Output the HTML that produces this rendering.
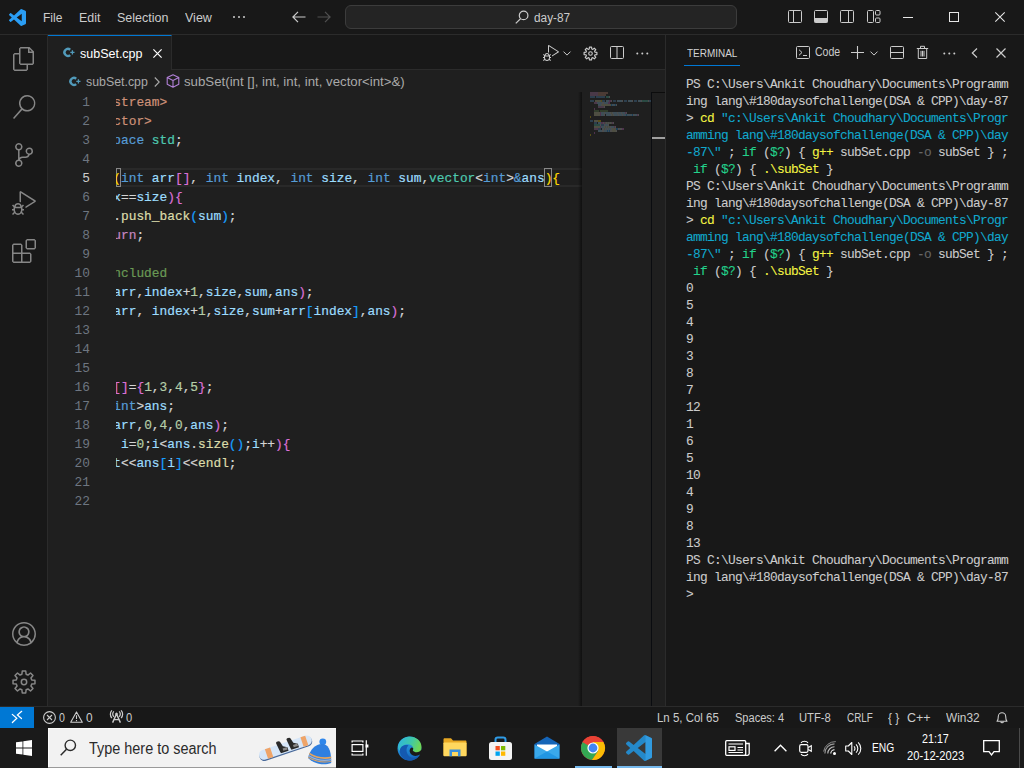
<!DOCTYPE html>
<html lang="en">
<head>
<meta charset="utf-8">
<title>subSet.cpp - day-87 - Visual Studio Code</title>
<style>
*{box-sizing:border-box;margin:0;padding:0}
html,body{width:1024px;height:768px;overflow:hidden;background:#181818}
body{position:relative;font-family:"Liberation Sans",sans-serif;font-size:13px;color:#cccccc}
.abs{position:absolute}
svg{position:absolute;overflow:visible}
.t{position:absolute;white-space:pre;line-height:1}
/* title bar */
#titlebar{left:0;top:0;width:1024px;height:35px;background:#181818;border-bottom:1px solid #2b2b2b}
.menu{top:11px;font-size:13.4px;color:#cccccc;letter-spacing:-0.35px}
#cmd{left:345px;top:5px;width:392px;height:24px;border:1px solid #3c3c3c;border-radius:6px;background:#242424}
/* activity bar */
#activity{left:0;top:35px;width:48px;height:671px;background:#181818;border-right:1px solid #2b2b2b}
/* tabs */
#tabs{left:48px;top:35px;width:617px;height:35px;background:#181818;border-bottom:1px solid #2b2b2b}
#tab{left:0;top:0;width:124px;height:35px;background:#1f1f1f;border-top:1px solid #0078d4;border-right:1px solid #2b2b2b}
/* editor */
#editor{left:48px;top:70px;width:617px;height:636px;background:#1f1f1f}
#crumbs{left:0;top:0;width:617px;height:22px}
.ln{position:absolute;left:0;width:42px;text-align:right;font-family:"Liberation Mono",monospace;font-size:12.83px;line-height:19px;height:19px;color:#6e7681;white-space:pre}
#code{left:68px;top:23px;width:467px;height:614px;overflow:hidden}
#codein{position:absolute;left:-87.4px;top:0}
.cl{height:19px;line-height:19px;white-space:pre;font-family:"Liberation Mono",monospace;font-size:12.83px;color:#d4d4d4;-webkit-text-stroke:0.2px currentColor}
.k{color:#569cd6}.c{color:#c586c0}.s{color:#ce9178}.ty{color:#4ec9b0}.f{color:#dcdcaa}.v{color:#9cdcfe}.n{color:#b5cea8}.cm{color:#6a9955}
.b1{color:#ffd700}.b2{color:#da70d6}.b3{color:#179fff}
.bm{}
/* panel */
#panel{left:665px;top:35px;width:359px;height:671px;background:#181818;border-left:1px solid #2b2b2b}
.tl{position:absolute;left:20px;height:17px;line-height:17px;white-space:pre;font-family:"Liberation Mono",monospace;font-size:12.83px;letter-spacing:-0.7px;color:#cccccc;-webkit-text-stroke:0.08px currentColor}
.ty2{color:#f5f543}.tc{color:#11a8cd}.tg{color:#23d18b}.tgr{color:#666666}
/* status bar */
#status{left:0;top:706px;width:1024px;height:22px;background:#181818;border-top:1px solid #2b2b2b}
.st{top:5px;font-size:12px;color:#cccccc;letter-spacing:-0.3px}
/* taskbar */
#taskbar{left:0;top:728px;width:1024px;height:40px;background:#1a1a1a}
</style>
</head>
<body>
<!-- TITLE BAR -->
<div id="titlebar" class="abs">
  <div id="cmd" class="abs"></div>
</div>

<!-- ACTIVITY BAR -->
<div id="activity" class="abs"></div>

<!-- TABS -->
<div id="tabs" class="abs">
  <div id="tab" class="abs">
  </div>
</div>

<!-- EDITOR -->
<div id="editor" class="abs">
  <div id="crumbs" class="abs">
  </div>
  <div id="lines" class="abs" style="left:0;top:23px">
<div class="ln" style="top:0px">1</div>
<div class="ln" style="top:19px">2</div>
<div class="ln" style="top:38px">3</div>
<div class="ln" style="top:57px">4</div>
<div class="ln" style="top:76px;color:#cccccc">5</div>
<div class="ln" style="top:95px">6</div>
<div class="ln" style="top:114px">7</div>
<div class="ln" style="top:133px">8</div>
<div class="ln" style="top:152px">9</div>
<div class="ln" style="top:171px">10</div>
<div class="ln" style="top:190px">11</div>
<div class="ln" style="top:209px">12</div>
<div class="ln" style="top:228px">13</div>
<div class="ln" style="top:247px">14</div>
<div class="ln" style="top:266px">15</div>
<div class="ln" style="top:285px">16</div>
<div class="ln" style="top:304px">17</div>
<div class="ln" style="top:323px">18</div>
<div class="ln" style="top:342px">19</div>
<div class="ln" style="top:361px">20</div>
<div class="ln" style="top:380px">21</div>
<div class="ln" style="top:399px">22</div>
</div>
  <div class="abs" style="left:68px;top:98px;width:466px;height:19px;border-top:2px solid #292929;border-bottom:2px solid #292929"></div>
  <div class="abs" style="left:68px;top:98px;width:5px;height:19px;border:1px solid #888888"></div>
  <div class="abs" style="left:496px;top:98px;width:8px;height:19px;border:1px solid #888888"></div>
  <div id="code" class="abs"><div id="codein">
<div class="cl"><span class="c">#include</span><span class="s">&lt;iostream&gt;</span></div>
<div class="cl"><span class="c">#include</span><span class="s">&lt;vector&gt;</span></div>
<div class="cl"><span class="k">using</span> <span class="k">namespace</span> <span class="ty">std</span>;</div>
<div class="cl"></div>
<div class="cl"><span class="k">void</span> <span class="f">subSet</span><span class="b1 bm">(</span><span class="k">int</span> <span class="v">arr</span><span class="b2">[]</span>, <span class="k">int</span> <span class="v">index</span>, <span class="k">int</span> <span class="v">size</span>, <span class="k">int</span> <span class="v">sum</span>,<span class="ty">vector</span>&lt;<span class="k">int</span>&gt;<span class="k">&amp;</span><span class="v">ans</span><span class="b1 bm">)</span><span class="b1">{</span></div>
<div class="cl">    <span class="c">if</span><span class="b2">(</span><span class="v">index</span>==<span class="v">size</span><span class="b2">)</span><span class="b2">{</span></div>
<div class="cl">        <span class="v">ans</span>.<span class="f">push_back</span><span class="b3">(</span><span class="v">sum</span><span class="b3">)</span>;</div>
<div class="cl">        <span class="c">return</span>;</div>
<div class="cl">    <span class="b2">}</span></div>
<div class="cl">    <span class="cm">//not included</span></div>
<div class="cl">    <span class="f">subSet</span><span class="b2">(</span><span class="v">arr</span>,<span class="v">index</span>+<span class="n">1</span>,<span class="v">size</span>,<span class="v">sum</span>,<span class="v">ans</span><span class="b2">)</span>;</div>
<div class="cl">    <span class="f">subSet</span><span class="b2">(</span><span class="v">arr</span>, <span class="v">index</span>+<span class="n">1</span>,<span class="v">size</span>,<span class="v">sum</span>+<span class="v">arr</span><span class="b3">[</span><span class="v">index</span><span class="b3">]</span>,<span class="v">ans</span><span class="b2">)</span>;</div>
<div class="cl"><span class="b1">}</span></div>
<div class="cl"></div>
<div class="cl"><span class="k">int</span> <span class="f">main</span><span class="b1">(</span><span class="b1">)</span><span class="b1">{</span></div>
<div class="cl">    <span class="k">int</span> <span class="v">arr</span><span class="b2">[]</span>=<span class="b2">{</span><span class="n">1</span>,<span class="n">3</span>,<span class="n">4</span>,<span class="n">5</span><span class="b2">}</span>;</div>
<div class="cl">    <span class="ty">vector</span>&lt;<span class="k">int</span>&gt;<span class="v">ans</span>;</div>
<div class="cl">    <span class="f">subSet</span><span class="b2">(</span><span class="v">arr</span>,<span class="n">0</span>,<span class="n">4</span>,<span class="n">0</span>,<span class="v">ans</span><span class="b2">)</span>;</div>
<div class="cl">    <span class="c">for</span><span class="b2">(</span><span class="k">int</span> <span class="v">i</span>=<span class="n">0</span>;<span class="v">i</span>&lt;<span class="v">ans</span>.<span class="f">size</span><span class="b3">()</span>;<span class="v">i</span>++<span class="b2">)</span><span class="b2">{</span></div>
<div class="cl">        <span class="v">cout</span>&lt;&lt;<span class="v">ans</span><span class="b3">[</span><span class="v">i</span><span class="b3">]</span>&lt;&lt;<span class="f">endl</span>;</div>
<div class="cl">    <span class="b2">}</span></div>
<div class="cl"><span class="b1">}</span></div>
</div></div>
</div>

<!-- PANEL -->
<div id="panel" class="abs">
  <div class="abs" style="left:18px;top:30px;width:56px;height:1px;background:#0078d4"></div>
  <div id="term" class="abs" style="left:0;top:41px">
<div class="tl" style="top:0px">PS C:\Users\Ankit Choudhary\Documents\Programm</div>
<div class="tl" style="top:17px">ing lang\#180daysofchallenge(DSA &amp; CPP)\day-87</div>
<div class="tl" style="top:34px">&gt; <span class="ty2">cd</span> <span class="tc">&quot;c:\Users\Ankit Choudhary\Documents\Progr</span></div>
<div class="tl" style="top:51px"><span class="tc">amming lang\#180daysofchallenge(DSA &amp; CPP)\day</span></div>
<div class="tl" style="top:68px"><span class="tc">-87\&quot;</span> ; <span class="tg">if</span> (<span class="tg">$?</span>) { <span class="ty2">g++</span> subSet.cpp <span class="tgr">-o</span> subSet } ;</div>
<div class="tl" style="top:85px"> <span class="tg">if</span> (<span class="tg">$?</span>) { <span class="ty2">.\subSet</span> }</div>
<div class="tl" style="top:102px">PS C:\Users\Ankit Choudhary\Documents\Programm</div>
<div class="tl" style="top:119px">ing lang\#180daysofchallenge(DSA &amp; CPP)\day-87</div>
<div class="tl" style="top:136px">&gt; <span class="ty2">cd</span> <span class="tc">&quot;c:\Users\Ankit Choudhary\Documents\Progr</span></div>
<div class="tl" style="top:153px"><span class="tc">amming lang\#180daysofchallenge(DSA &amp; CPP)\day</span></div>
<div class="tl" style="top:170px"><span class="tc">-87\&quot;</span> ; <span class="tg">if</span> (<span class="tg">$?</span>) { <span class="ty2">g++</span> subSet.cpp <span class="tgr">-o</span> subSet } ;</div>
<div class="tl" style="top:187px"> <span class="tg">if</span> (<span class="tg">$?</span>) { <span class="ty2">.\subSet</span> }</div>
<div class="tl" style="top:204px">0</div>
<div class="tl" style="top:221px">5</div>
<div class="tl" style="top:238px">4</div>
<div class="tl" style="top:255px">9</div>
<div class="tl" style="top:272px">3</div>
<div class="tl" style="top:289px">8</div>
<div class="tl" style="top:306px">7</div>
<div class="tl" style="top:323px">12</div>
<div class="tl" style="top:340px">1</div>
<div class="tl" style="top:357px">6</div>
<div class="tl" style="top:374px">5</div>
<div class="tl" style="top:391px">10</div>
<div class="tl" style="top:408px">4</div>
<div class="tl" style="top:425px">9</div>
<div class="tl" style="top:442px">8</div>
<div class="tl" style="top:459px">13</div>
<div class="tl" style="top:476px">PS C:\Users\Ankit Choudhary\Documents\Programm</div>
<div class="tl" style="top:493px">ing lang\#180daysofchallenge(DSA &amp; CPP)\day-87</div>
<div class="tl" style="top:510px">&gt;</div>
</div>
</div>

<!-- STATUS BAR -->
<div id="status" class="abs">
  <div class="abs" style="left:0;top:0;width:34px;height:21px;background:#0078d4"></div>
</div>

<!-- TASKBAR -->
<div id="taskbar" class="abs">
  <div class="abs" style="left:48px;top:0;width:288px;height:40px;background:#f2f2f2;border-bottom:1px solid #9a9a9a;box-shadow:inset 1px 1px 0 #fbfbfb"></div>
</div>
<span class="t" id="m1" style="left:43.2px;top:11.00px;font-size:13px;color:#cccccc;transform-origin:0 0;transform:scaleX(0.9259)">File</span>
<span class="t" id="m2" style="left:78.8px;top:11.00px;font-size:13px;color:#cccccc;transform-origin:0 0;transform:scaleX(0.9551)">Edit</span>
<span class="t" id="m3" style="left:116.5px;top:11.00px;font-size:13px;color:#cccccc;transform-origin:0 0;transform:scaleX(0.9629)">Selection</span>
<span class="t" id="m4" style="left:184.8px;top:11.00px;font-size:13px;color:#cccccc;transform-origin:0 0;transform:scaleX(0.9623)">View</span>
<span class="t" id="cc" style="left:534.1px;top:11.64px;font-size:12px;color:#cccccc;transform-origin:0 0;transform:scaleX(0.9836)">day-87</span>
<span class="t" id="tb" style="left:80px;top:46.60px;font-size:13px;color:#ffffff;transform-origin:0 0;transform:scaleX(0.9608)">subSet.cpp</span>
<span class="t" id="b1" style="left:86.2px;top:74.70px;font-size:13px;color:#a9a9a9;transform-origin:0 0;transform:scaleX(0.9501)">subSet.cpp</span>
<span class="t" id="b2" style="left:184.2px;top:74.70px;font-size:13px;color:#a9a9a9;transform-origin:0 0;transform:scaleX(1.0185)">subSet(int [], int, int, int, vector&lt;int&gt;&amp;)</span>
<span class="t" id="pt" style="left:686.8px;top:47.79px;font-size:11px;color:#d4d4d4;transform-origin:0 0;transform:scaleX(0.9043)">TERMINAL</span>
<span class="t" id="pc" style="left:814.7px;top:46.04px;font-size:12px;color:#cccccc;transform-origin:0 0;transform:scaleX(0.8784)">Code</span>
<span class="t" id="s1" style="left:59.4px;top:711.54px;font-size:12px;color:#cccccc;transform-origin:0 0;transform:scaleX(0.8822)">0</span>
<span class="t" id="s2" style="left:86.4px;top:711.54px;font-size:12px;color:#cccccc;transform-origin:0 0;transform:scaleX(0.9869)">0</span>
<span class="t" id="s3" style="left:126.3px;top:711.54px;font-size:12px;color:#cccccc;transform-origin:0 0;transform:scaleX(0.9271)">0</span>
<span class="t" id="s4" style="left:656.9px;top:711.64px;font-size:12px;color:#cccccc;transform-origin:0 0;transform:scaleX(0.9549)">Ln 5, Col 65</span>
<span class="t" id="s5" style="left:734.5px;top:711.64px;font-size:12px;color:#cccccc;transform-origin:0 0;transform:scaleX(0.9199)">Spaces: 4</span>
<span class="t" id="s6" style="left:799.4px;top:711.64px;font-size:12px;color:#cccccc;transform-origin:0 0;transform:scaleX(0.9353)">UTF-8</span>
<span class="t" id="s7" style="left:847.4px;top:711.64px;font-size:12px;color:#cccccc;transform-origin:0 0;transform:scaleX(0.8231)">CRLF</span>
<span class="t" id="s8" style="left:888.2px;top:711.64px;font-size:12px;color:#cccccc;transform-origin:0 0;transform:scaleX(0.9948)">{ }</span>
<span class="t" id="s9" style="left:907px;top:711.64px;font-size:12px;color:#cccccc;transform-origin:0 0;transform:scaleX(1.0402)">C++</span>
<span class="t" id="s10" style="left:945.6px;top:711.64px;font-size:12px;color:#cccccc;transform-origin:0 0;transform:scaleX(0.9907)">Win32</span>
<span class="t" id="k1" style="left:88.5px;top:740.89px;font-size:15.6px;color:#2b2b2b;transform-origin:0 0;transform:scaleX(0.9251)">Type here to search</span>
<span class="t" id="k2" style="left:871.6px;top:741.54px;font-size:12px;color:#ffffff;transform-origin:0 0;transform:scaleX(0.8533)">ENG</span>
<span class="t" id="k3" style="left:922px;top:732.74px;font-size:12px;color:#ffffff;transform-origin:0 0;transform:scaleX(0.8924)">21:17</span>
<span class="t" id="k4" style="left:907.2px;top:750.44px;font-size:12px;color:#ffffff;transform-origin:0 0;transform:scaleX(0.9317)">20-12-2023</span>
<!-- editor decorations -->
<div class="abs" style="left:578px;top:92px;width:4px;height:614px;background:linear-gradient(to right,rgba(0,0,0,0),rgba(0,0,0,0.5))"></div>
<div class="abs" style="left:651px;top:92px;width:1px;height:614px;background:#0a0c10"></div>
<div class="abs" style="left:652px;top:137px;width:13px;height:2px;background:#a0a0a0"></div>
<div class="abs" style="left:652px;top:92px;width:13px;height:1px;background:#0c0c0c"></div>
<svg style="left:590px;top:92px" width="61" height="44" opacity="0.36"><rect x="0.00" y="0.3" width="8.00" height="1.4" fill="#c586c0"/><rect x="8.00" y="0.3" width="10.00" height="1.4" fill="#ce9178"/><rect x="0.00" y="2.3" width="8.00" height="1.4" fill="#c586c0"/><rect x="8.00" y="2.3" width="8.00" height="1.4" fill="#ce9178"/><rect x="0.00" y="4.3" width="5.00" height="1.4" fill="#569cd6"/><rect x="6.00" y="4.3" width="9.00" height="1.4" fill="#569cd6"/><rect x="16.00" y="4.3" width="3.00" height="1.4" fill="#4ec9b0"/><rect x="19.00" y="4.3" width="1.00" height="1.4" fill="#d4d4d4"/><rect x="0.00" y="8.3" width="4.00" height="1.4" fill="#569cd6"/><rect x="5.00" y="8.3" width="6.00" height="1.4" fill="#dcdcaa"/><rect x="11.00" y="8.3" width="1.00" height="1.4" fill="#ffd700"/><rect x="12.00" y="8.3" width="3.00" height="1.4" fill="#569cd6"/><rect x="16.00" y="8.3" width="3.00" height="1.4" fill="#9cdcfe"/><rect x="19.00" y="8.3" width="2.00" height="1.4" fill="#da70d6"/><rect x="21.00" y="8.3" width="1.00" height="1.4" fill="#d4d4d4"/><rect x="23.00" y="8.3" width="3.00" height="1.4" fill="#569cd6"/><rect x="27.00" y="8.3" width="5.00" height="1.4" fill="#9cdcfe"/><rect x="32.00" y="8.3" width="1.00" height="1.4" fill="#d4d4d4"/><rect x="34.00" y="8.3" width="3.00" height="1.4" fill="#569cd6"/><rect x="38.00" y="8.3" width="4.00" height="1.4" fill="#9cdcfe"/><rect x="42.00" y="8.3" width="1.00" height="1.4" fill="#d4d4d4"/><rect x="44.00" y="8.3" width="3.00" height="1.4" fill="#569cd6"/><rect x="48.00" y="8.3" width="3.00" height="1.4" fill="#9cdcfe"/><rect x="51.00" y="8.3" width="1.00" height="1.4" fill="#d4d4d4"/><rect x="52.00" y="8.3" width="6.00" height="1.4" fill="#4ec9b0"/><rect x="58.00" y="8.3" width="1.00" height="1.4" fill="#d4d4d4"/><rect x="59.00" y="8.3" width="2.00" height="1.4" fill="#569cd6"/><rect x="4.00" y="10.3" width="2.00" height="1.4" fill="#c586c0"/><rect x="6.00" y="10.3" width="1.00" height="1.4" fill="#da70d6"/><rect x="7.00" y="10.3" width="5.00" height="1.4" fill="#9cdcfe"/><rect x="12.00" y="10.3" width="2.00" height="1.4" fill="#d4d4d4"/><rect x="14.00" y="10.3" width="4.00" height="1.4" fill="#9cdcfe"/><rect x="18.00" y="10.3" width="1.00" height="1.4" fill="#da70d6"/><rect x="19.00" y="10.3" width="1.00" height="1.4" fill="#da70d6"/><rect x="8.00" y="12.3" width="3.00" height="1.4" fill="#9cdcfe"/><rect x="11.00" y="12.3" width="1.00" height="1.4" fill="#d4d4d4"/><rect x="12.00" y="12.3" width="9.00" height="1.4" fill="#dcdcaa"/><rect x="21.00" y="12.3" width="1.00" height="1.4" fill="#179fff"/><rect x="22.00" y="12.3" width="3.00" height="1.4" fill="#9cdcfe"/><rect x="25.00" y="12.3" width="1.00" height="1.4" fill="#179fff"/><rect x="26.00" y="12.3" width="1.00" height="1.4" fill="#d4d4d4"/><rect x="8.00" y="14.3" width="6.00" height="1.4" fill="#c586c0"/><rect x="14.00" y="14.3" width="1.00" height="1.4" fill="#d4d4d4"/><rect x="4.00" y="16.3" width="1.00" height="1.4" fill="#da70d6"/><rect x="4.00" y="18.3" width="5.00" height="1.4" fill="#6a9955"/><rect x="10.00" y="18.3" width="8.00" height="1.4" fill="#6a9955"/><rect x="4.00" y="20.3" width="6.00" height="1.4" fill="#dcdcaa"/><rect x="10.00" y="20.3" width="1.00" height="1.4" fill="#da70d6"/><rect x="11.00" y="20.3" width="3.00" height="1.4" fill="#9cdcfe"/><rect x="14.00" y="20.3" width="1.00" height="1.4" fill="#d4d4d4"/><rect x="15.00" y="20.3" width="5.00" height="1.4" fill="#9cdcfe"/><rect x="20.00" y="20.3" width="1.00" height="1.4" fill="#d4d4d4"/><rect x="21.00" y="20.3" width="1.00" height="1.4" fill="#b5cea8"/><rect x="22.00" y="20.3" width="1.00" height="1.4" fill="#d4d4d4"/><rect x="23.00" y="20.3" width="4.00" height="1.4" fill="#9cdcfe"/><rect x="27.00" y="20.3" width="1.00" height="1.4" fill="#d4d4d4"/><rect x="28.00" y="20.3" width="3.00" height="1.4" fill="#9cdcfe"/><rect x="31.00" y="20.3" width="1.00" height="1.4" fill="#d4d4d4"/><rect x="32.00" y="20.3" width="3.00" height="1.4" fill="#9cdcfe"/><rect x="35.00" y="20.3" width="1.00" height="1.4" fill="#da70d6"/><rect x="36.00" y="20.3" width="1.00" height="1.4" fill="#d4d4d4"/><rect x="4.00" y="22.3" width="6.00" height="1.4" fill="#dcdcaa"/><rect x="10.00" y="22.3" width="1.00" height="1.4" fill="#da70d6"/><rect x="11.00" y="22.3" width="3.00" height="1.4" fill="#9cdcfe"/><rect x="14.00" y="22.3" width="1.00" height="1.4" fill="#d4d4d4"/><rect x="16.00" y="22.3" width="5.00" height="1.4" fill="#9cdcfe"/><rect x="21.00" y="22.3" width="1.00" height="1.4" fill="#d4d4d4"/><rect x="22.00" y="22.3" width="1.00" height="1.4" fill="#b5cea8"/><rect x="23.00" y="22.3" width="1.00" height="1.4" fill="#d4d4d4"/><rect x="24.00" y="22.3" width="4.00" height="1.4" fill="#9cdcfe"/><rect x="28.00" y="22.3" width="1.00" height="1.4" fill="#d4d4d4"/><rect x="29.00" y="22.3" width="3.00" height="1.4" fill="#9cdcfe"/><rect x="32.00" y="22.3" width="1.00" height="1.4" fill="#d4d4d4"/><rect x="33.00" y="22.3" width="3.00" height="1.4" fill="#9cdcfe"/><rect x="36.00" y="22.3" width="1.00" height="1.4" fill="#179fff"/><rect x="37.00" y="22.3" width="5.00" height="1.4" fill="#9cdcfe"/><rect x="42.00" y="22.3" width="1.00" height="1.4" fill="#179fff"/><rect x="43.00" y="22.3" width="1.00" height="1.4" fill="#d4d4d4"/><rect x="44.00" y="22.3" width="3.00" height="1.4" fill="#9cdcfe"/><rect x="47.00" y="22.3" width="1.00" height="1.4" fill="#da70d6"/><rect x="48.00" y="22.3" width="1.00" height="1.4" fill="#d4d4d4"/><rect x="0.00" y="24.3" width="1.00" height="1.4" fill="#ffd700"/><rect x="0.00" y="28.3" width="3.00" height="1.4" fill="#569cd6"/><rect x="4.00" y="28.3" width="4.00" height="1.4" fill="#dcdcaa"/><rect x="8.00" y="28.3" width="1.00" height="1.4" fill="#ffd700"/><rect x="9.00" y="28.3" width="1.00" height="1.4" fill="#ffd700"/><rect x="10.00" y="28.3" width="1.00" height="1.4" fill="#ffd700"/><rect x="4.00" y="30.3" width="3.00" height="1.4" fill="#569cd6"/><rect x="8.00" y="30.3" width="3.00" height="1.4" fill="#9cdcfe"/><rect x="11.00" y="30.3" width="2.00" height="1.4" fill="#da70d6"/><rect x="13.00" y="30.3" width="1.00" height="1.4" fill="#d4d4d4"/><rect x="14.00" y="30.3" width="1.00" height="1.4" fill="#da70d6"/><rect x="15.00" y="30.3" width="1.00" height="1.4" fill="#b5cea8"/><rect x="16.00" y="30.3" width="1.00" height="1.4" fill="#d4d4d4"/><rect x="17.00" y="30.3" width="1.00" height="1.4" fill="#b5cea8"/><rect x="18.00" y="30.3" width="1.00" height="1.4" fill="#d4d4d4"/><rect x="19.00" y="30.3" width="1.00" height="1.4" fill="#b5cea8"/><rect x="20.00" y="30.3" width="1.00" height="1.4" fill="#d4d4d4"/><rect x="21.00" y="30.3" width="1.00" height="1.4" fill="#b5cea8"/><rect x="22.00" y="30.3" width="1.00" height="1.4" fill="#da70d6"/><rect x="23.00" y="30.3" width="1.00" height="1.4" fill="#d4d4d4"/><rect x="4.00" y="32.3" width="6.00" height="1.4" fill="#4ec9b0"/><rect x="10.00" y="32.3" width="1.00" height="1.4" fill="#d4d4d4"/><rect x="11.00" y="32.3" width="3.00" height="1.4" fill="#569cd6"/><rect x="14.00" y="32.3" width="1.00" height="1.4" fill="#d4d4d4"/><rect x="15.00" y="32.3" width="3.00" height="1.4" fill="#9cdcfe"/><rect x="18.00" y="32.3" width="1.00" height="1.4" fill="#d4d4d4"/><rect x="4.00" y="34.3" width="6.00" height="1.4" fill="#dcdcaa"/><rect x="10.00" y="34.3" width="1.00" height="1.4" fill="#da70d6"/><rect x="11.00" y="34.3" width="3.00" height="1.4" fill="#9cdcfe"/><rect x="14.00" y="34.3" width="1.00" height="1.4" fill="#d4d4d4"/><rect x="15.00" y="34.3" width="1.00" height="1.4" fill="#b5cea8"/><rect x="16.00" y="34.3" width="1.00" height="1.4" fill="#d4d4d4"/><rect x="17.00" y="34.3" width="1.00" height="1.4" fill="#b5cea8"/><rect x="18.00" y="34.3" width="1.00" height="1.4" fill="#d4d4d4"/><rect x="19.00" y="34.3" width="1.00" height="1.4" fill="#b5cea8"/><rect x="20.00" y="34.3" width="1.00" height="1.4" fill="#d4d4d4"/><rect x="21.00" y="34.3" width="3.00" height="1.4" fill="#9cdcfe"/><rect x="24.00" y="34.3" width="1.00" height="1.4" fill="#da70d6"/><rect x="25.00" y="34.3" width="1.00" height="1.4" fill="#d4d4d4"/><rect x="4.00" y="36.3" width="3.00" height="1.4" fill="#c586c0"/><rect x="7.00" y="36.3" width="1.00" height="1.4" fill="#da70d6"/><rect x="8.00" y="36.3" width="3.00" height="1.4" fill="#569cd6"/><rect x="12.00" y="36.3" width="1.00" height="1.4" fill="#9cdcfe"/><rect x="13.00" y="36.3" width="1.00" height="1.4" fill="#d4d4d4"/><rect x="14.00" y="36.3" width="1.00" height="1.4" fill="#b5cea8"/><rect x="15.00" y="36.3" width="1.00" height="1.4" fill="#d4d4d4"/><rect x="16.00" y="36.3" width="1.00" height="1.4" fill="#9cdcfe"/><rect x="17.00" y="36.3" width="1.00" height="1.4" fill="#d4d4d4"/><rect x="18.00" y="36.3" width="3.00" height="1.4" fill="#9cdcfe"/><rect x="21.00" y="36.3" width="1.00" height="1.4" fill="#d4d4d4"/><rect x="22.00" y="36.3" width="4.00" height="1.4" fill="#dcdcaa"/><rect x="26.00" y="36.3" width="2.00" height="1.4" fill="#179fff"/><rect x="28.00" y="36.3" width="1.00" height="1.4" fill="#d4d4d4"/><rect x="29.00" y="36.3" width="1.00" height="1.4" fill="#9cdcfe"/><rect x="30.00" y="36.3" width="2.00" height="1.4" fill="#d4d4d4"/><rect x="32.00" y="36.3" width="1.00" height="1.4" fill="#da70d6"/><rect x="33.00" y="36.3" width="1.00" height="1.4" fill="#da70d6"/><rect x="8.00" y="38.3" width="4.00" height="1.4" fill="#9cdcfe"/><rect x="12.00" y="38.3" width="2.00" height="1.4" fill="#d4d4d4"/><rect x="14.00" y="38.3" width="3.00" height="1.4" fill="#9cdcfe"/><rect x="17.00" y="38.3" width="1.00" height="1.4" fill="#179fff"/><rect x="18.00" y="38.3" width="1.00" height="1.4" fill="#9cdcfe"/><rect x="19.00" y="38.3" width="1.00" height="1.4" fill="#179fff"/><rect x="20.00" y="38.3" width="2.00" height="1.4" fill="#d4d4d4"/><rect x="22.00" y="38.3" width="4.00" height="1.4" fill="#dcdcaa"/><rect x="26.00" y="38.3" width="1.00" height="1.4" fill="#d4d4d4"/><rect x="4.00" y="40.3" width="1.00" height="1.4" fill="#da70d6"/><rect x="0.00" y="42.3" width="1.00" height="1.4" fill="#ffd700"/></svg>
<!-- VS Code logo -->
<svg style="left:9px;top:9px" width="17" height="17" viewBox="0 0 24 24"><path fill="#2a9df4" d="M23.15 2.587L18.21.21a1.494 1.494 0 0 0-1.705.29l-9.46 8.63-4.12-3.128a.999.999 0 0 0-1.276.057L.327 7.261A1 1 0 0 0 .326 8.74L3.899 12 .326 15.26a1 1 0 0 0 .001 1.479L1.65 17.94a.999.999 0 0 0 1.276.057l4.12-3.128 9.46 8.63a1.492 1.492 0 0 0 1.704.29l4.942-2.377A1.5 1.5 0 0 0 24 20.06V3.939a1.5 1.5 0 0 0-.85-1.352zm-5.146 14.861L10.826 12l7.178-5.448v10.896z"/></svg>
<!-- activity bar icons -->
<svg style="left:12px;top:47px" width="24" height="24" viewBox="0 0 24 24"><path fill="#868686" d="M17.5 0h-9L7 1.5V6H2.5L1 7.500v15.070L2.500 24h12.070L16 22.570V18h4.700l1.300-1.430V4.500L17.500 0zm0 2.120l2.380 2.380H17.500V2.120zm-3 20.380h-12v-15H7v9.070L8.500 18h6v4.500zm6-6h-12v-15H16V6h4.500v10.500z"/></svg>
<svg style="left:12px;top:95px" width="24" height="24" viewBox="0 0 24 24"><path fill="#868686" d="M15.250 0a8.250 8.250 0 0 0-6.180 13.720L1 22.880l1.120 1.120 8.050-9.120A8.251 8.251 0 1 0 15.250.010V0zm0 15a6.750 6.750 0 1 1 0-13.500 6.750 6.750 0 0 1 0 13.500z"/></svg>
<svg style="left:12px;top:143px" width="24" height="24" viewBox="0 0 24 24"><path fill="#868686" d="M21.007 8.222A3.738 3.738 0 0 0 15.045 5.200a3.737 3.737 0 0 0 1.156 6.583 2.988 2.988 0 0 1-2.668 1.670h-2.990a4.456 4.456 0 0 0-2.989 1.165V7.400a3.737 3.737 0 1 0-1.494 0v9.117a3.776 3.776 0 1 0 1.816.099 2.990 2.990 0 0 1 2.668-1.667h2.990a4.484 4.484 0 0 0 4.223-3.039 3.736 3.736 0 0 0 3.250-3.687zM4.565 3.738a2.242 2.242 0 1 1 4.484 0 2.242 2.242 0 0 1-4.484 0zm4.484 16.441a2.242 2.242 0 1 1-4.484 0 2.242 2.242 0 0 1 4.484 0zm8.221-9.715a2.242 2.242 0 1 1 0-4.485 2.242 2.242 0 0 1 0 4.485z"/></svg>
<svg style="left:12px;top:191px" width="24" height="24" viewBox="0 0 24 24"><path fill="#868686" d="M10.940 13.500l-1.320 1.320a3.730 3.730 0 0 0-7.240 0L1.060 13.500 0 14.560l1.720 1.720-.22.220V18H0v1.500h1.500v.080c.077.489.214.966.410 1.420L0 22.940 1.060 24l1.650-1.650A4.308 4.308 0 0 0 6 24a4.310 4.310 0 0 0 3.290-1.650L10.940 24 12 22.940 10.090 21c.198-.464.336-.951.410-1.450v-.1H12V18h-1.500v-1.500l-.22-.220L12 14.560l-1.060-1.060zM6 13.500a2.250 2.250 0 0 1 2.250 2.250h-4.500A2.250 2.250 0 0 1 6 13.500zm3 6a3.330 3.330 0 0 1-3 3 3.330 3.330 0 0 1-3-3v-2.250h6v2.250zm14.760-9.900v1.260L13.500 17.370V15.600l8.500-5.370L9 2v9.460a5.070 5.070 0 0 0-1.500-.72V.630L8.640 0l15.120 9.600z"/></svg>
<svg style="left:12px;top:239px" width="24" height="24" viewBox="0 0 24 24"><path fill="#868686" d="M13.500 1.500L15 0h7.500L24 1.500V9l-1.500 1.500H15L13.500 9V1.500zm1.500 0V9h7.500V1.500H15zM0 15V6l1.500-1.500H9L10.500 6v7.500H18l1.500 1.500v7.500L18 24H1.500L0 22.500V15zm9-1.500V6H1.500v7.500H9zM9 15H1.500v7.500H9V15zm1.500 7.500H18V15h-7.500v7.500z"/></svg>
<!-- account + manage -->
<svg style="left:12px;top:622px" width="24" height="24" viewBox="0 0 16 16"><path fill="#868686" d="M16 7.992C16 3.580 12.416 0 8 0S0 3.580 0 7.992c0 2.430 1.104 4.620 2.832 6.090.016.016.032.016.032.032.144.112.288.224.448.336.080.048.144.111.224.175A7.980 7.980 0 0 0 8.016 16a7.980 7.980 0 0 0 4.480-1.375c.080-.048.144-.111.224-.160.144-.111.304-.223.448-.335.016-.016.032-.016.032-.032 1.696-1.487 2.800-3.676 2.800-6.106zm-8 7.001c-1.504 0-2.880-.480-4.016-1.279.016-.128.048-.255.080-.383a4.170 4.170 0 0 1 .416-.991c.176-.304.384-.576.640-.816.240-.240.528-.463.816-.639.304-.176.624-.304.976-.400A4.150 4.150 0 0 1 8 10.342a4.185 4.185 0 0 1 2.928 1.166c.368.368.656.800.864 1.295.112.288.192.592.240.911A7.030 7.030 0 0 1 8 14.993zm-2.448-7.400a2.490 2.490 0 0 1-.208-1.024c0-.351.064-.703.208-1.023.144-.320.336-.607.576-.847.240-.240.528-.431.848-.575.320-.144.672-.208 1.024-.208.368 0 .704.064 1.024.208.320.144.608.336.848.575.240.240.432.528.576.847.144.320.208.672.208 1.023 0 .368-.064.704-.208 1.023a2.840 2.840 0 0 1-.576.848 2.840 2.840 0 0 1-.848.575 2.715 2.715 0 0 1-2.064 0 2.840 2.840 0 0 1-.848-.575 2.526 2.526 0 0 1-.560-.848zm7.424 5.306c0-.032-.016-.048-.016-.080a5.220 5.220 0 0 0-.688-1.406 4.883 4.883 0 0 0-1.088-1.135 5.207 5.207 0 0 0-1.040-.608 2.820 2.820 0 0 0 .464-.383 4.200 4.200 0 0 0 .624-.784 3.624 3.624 0 0 0 .528-1.934 3.710 3.710 0 0 0-.288-1.470 3.799 3.799 0 0 0-.816-1.199 3.845 3.845 0 0 0-1.200-.800 3.720 3.720 0 0 0-1.472-.287 3.720 3.720 0 0 0-1.472.288 3.631 3.631 0 0 0-1.200.815 3.840 3.840 0 0 0-.800 1.199 3.710 3.710 0 0 0-.288 1.470c0 .352.048.688.144 1.007.096.336.224.640.400.927.160.288.384.544.624.784.144.144.304.271.480.383a5.120 5.120 0 0 0-1.040.624c-.416.320-.784.703-1.088 1.119a4.999 4.999 0 0 0-.688 1.406c-.016.032-.016.064-.016.080C1.776 11.636.992 9.910.992 7.992.992 4.140 4.144.991 8 .991s7.008 3.149 7.008 7.001a6.960 6.960 0 0 1-2.032 4.907z"/></svg>
<svg style="left:12px;top:670px" width="24" height="24" viewBox="0 0 24 24"><path fill="none" stroke="#868686" stroke-width="1.5" stroke-linejoin="round" d="M9.89 4.28 L10.26 1.04 L13.74 1.04 L14.11 4.28 L15.96 5.05 L18.52 3.02 L20.98 5.48 L18.95 8.04 L19.72 9.89 L22.96 10.26 L22.96 13.74 L19.72 14.11 L18.95 15.96 L20.98 18.52 L18.52 20.98 L15.96 18.95 L14.11 19.72 L13.74 22.96 L10.26 22.96 L9.89 19.72 L8.04 18.95 L5.48 20.98 L3.02 18.52 L5.05 15.96 L4.28 14.11 L1.04 13.74 L1.04 10.26 L4.28 9.89 L5.05 8.04 L3.02 5.48 L5.48 3.02 L8.04 5.05Z"/><circle cx="12" cy="12" r="2.7" fill="none" stroke="#868686" stroke-width="1.5"/></svg>
<svg style="left:232px;top:15px" width="14" height="4" viewBox="0 0 14 4"><circle cx="2" cy="2" r="1" fill="#cccccc"/><circle cx="7" cy="2" r="1" fill="#cccccc"/><circle cx="12" cy="2" r="1" fill="#cccccc"/></svg>
<svg style="left:292px;top:11px" width="14" height="12" viewBox="0 0 14 12"><path d="M6 0.8 L0.9 6 L6 11.2 M1 6 H13.5" fill="none" stroke="#cccccc" stroke-width="1.2"/></svg>
<svg style="left:317px;top:11px" width="14" height="12" viewBox="0 0 14 12"><path d="M8 0.8 L13.1 6 L8 11.2 M13 6 H0.5" fill="none" stroke="#505050" stroke-width="1.2"/></svg>
<svg style="left:515px;top:10px" width="14" height="14" viewBox="0 0 14 14"><circle cx="8.6" cy="5.4" r="4.3" fill="none" stroke="#cccccc" stroke-width="1.2"/><path d="M5.6 8.6 L0.8 13.4" stroke="#cccccc" stroke-width="1.3"/></svg>
<svg style="left:788px;top:10px" width="14" height="13" viewBox="0 0 14 13"><rect x="0.5" y="0.5" width="13" height="12" rx="1" fill="none" stroke="#cccccc"/><path d="M5.5 0.5V12.5" stroke="#cccccc"/></svg>
<svg style="left:814px;top:10px" width="14" height="13" viewBox="0 0 14 13"><rect x="0.5" y="0.5" width="13" height="12" rx="1" fill="none" stroke="#cccccc"/><rect x="0.5" y="8" width="13" height="4.5" fill="#cccccc"/></svg>
<svg style="left:840px;top:10px" width="14" height="13" viewBox="0 0 14 13"><rect x="0.5" y="0.5" width="13" height="12" rx="1" fill="none" stroke="#cccccc"/><path d="M8.5 0.500V12.500" stroke="#cccccc"/></svg>
<svg style="left:867px;top:10px" width="14" height="13" viewBox="0 0 14 13"><rect x="0.5" y="0.5" width="6" height="12" rx="1" fill="none" stroke="#cccccc"/><rect x="8.5" y="0.500" width="4.5" height="4.500" rx="1" fill="none" stroke="#cccccc"/><rect x="8.5" y="8" width="4.500" height="4.500" rx="1" fill="none" stroke="#cccccc"/></svg>
<svg style="left:903px;top:17px" width="10" height="1" viewBox="0 0 10 1"><rect width="10" height="1" fill="#e6e6e6"/></svg>
<svg style="left:949px;top:12px" width="10" height="10" viewBox="0 0 10 10"><rect x="0.5" y="0.5" width="9" height="9" fill="none" stroke="#e6e6e6"/></svg>
<svg style="left:995px;top:12px" width="10" height="10" viewBox="0 0 10 10"><path d="M0.3 0.3L9.7 9.7M9.7 0.3L0.3 9.7" stroke="#e6e6e6" stroke-width="1.05"/></svg>
<svg style="left:543px;top:45px" width="16" height="16" viewBox="0 0 24 24"><path fill="#cccccc" d="M10.940 13.500l-1.320 1.320a3.730 3.730 0 0 0-7.240 0L1.060 13.500 0 14.560l1.720 1.720-.22.220V18H0v1.500h1.500v.080c.077.489.214.966.410 1.420L0 22.940 1.060 24l1.650-1.650A4.308 4.308 0 0 0 6 24a4.310 4.310 0 0 0 3.290-1.650L10.940 24 12 22.940 10.090 21c.198-.464.336-.951.410-1.450v-.1H12V18h-1.500v-1.500l-.22-.220L12 14.560l-1.060-1.060zM6 13.500a2.250 2.250 0 0 1 2.250 2.250h-4.500A2.250 2.250 0 0 1 6 13.500zm3 6a3.330 3.330 0 0 1-3 3 3.330 3.330 0 0 1-3-3v-2.250h6v2.250zm14.760-9.900v1.260L13.500 17.370V15.600l8.500-5.370L9 2v9.460a5.070 5.070 0 0 0-1.500-.72V.630L8.640 0l15.120 9.600z"/></svg>
<svg style="left:563px;top:51px" width="8" height="5" viewBox="0 0 8 5"><path d="M0.500 0.600L4 4.100L7.500 0.600" fill="none" stroke="#cccccc" stroke-width="1"/></svg>
<svg style="left:582.5px;top:45.5px" width="15" height="15" viewBox="0 0 15 15"><path fill="none" stroke="#cccccc" stroke-width="1.150" stroke-linejoin="round" d="M6.22 2.98 L6.43 1.09 L8.57 1.09 L8.78 2.98 L9.80 3.40 L11.28 2.21 L12.79 3.72 L11.60 5.20 L12.02 6.22 L13.91 6.43 L13.91 8.57 L12.02 8.78 L11.60 9.80 L12.79 11.28 L11.28 12.79 L9.80 11.60 L8.78 12.02 L8.57 13.91 L6.43 13.91 L6.22 12.02 L5.20 11.60 L3.72 12.79 L2.21 11.28 L3.40 9.80 L2.98 8.78 L1.09 8.57 L1.09 6.43 L2.98 6.22 L3.40 5.20 L2.21 3.72 L3.72 2.21 L5.20 3.40Z"/><circle cx="7.500" cy="7.500" r="1.800" fill="none" stroke="#cccccc" stroke-width="1.100"/></svg>
<svg style="left:610px;top:46px" width="14" height="13" viewBox="0 0 14 13"><rect x="0.5" y="0.5" width="13" height="12" rx="1" fill="none" stroke="#cccccc"/><path d="M7 0.500V12.500" stroke="#cccccc"/></svg>
<svg style="left:636px;top:52px" width="13" height="3" viewBox="0 0 13 3"><circle cx="1.3" cy="1.500" r="1" fill="#cccccc"/><circle cx="6.300" cy="1.500" r="1" fill="#cccccc"/><circle cx="11.300" cy="1.500" r="1" fill="#cccccc"/></svg>
<svg style="left:795.5px;top:46px" width="14" height="13" viewBox="0 0 14 13"><rect x="0.5" y="0.5" width="13" height="12" rx="1" fill="none" stroke="#cccccc"/><path d="M3 3.700L6 6.500L3 9.300M7 9.500H11" fill="none" stroke="#cccccc"/></svg>
<svg style="left:851px;top:46px" width="13" height="13" viewBox="0 0 13 13"><path d="M6.500 0V13M0 6.500H13" stroke="#cccccc" stroke-width="1.100"/></svg>
<svg style="left:870px;top:51px" width="8" height="5" viewBox="0 0 8 5"><path d="M0.500 0.600L4 4.100L7.500 0.600" fill="none" stroke="#cccccc" stroke-width="1"/></svg>
<svg style="left:890px;top:46px" width="14" height="13" viewBox="0 0 14 13"><rect x="0.5" y="0.5" width="13" height="12" rx="1" fill="none" stroke="#cccccc"/><path d="M0.500 6.500H13.500" stroke="#cccccc"/></svg>
<svg style="left:916px;top:45px" width="13" height="15" viewBox="0 0 13 15"><path d="M0.800 3.500H12.200M4.500 3.300V1.300H8.500V3.300M2.300 3.700V13.500H10.700V3.700M5 5.800V11.500M6.500 5.800V11.500M8 5.800V11.500" fill="none" stroke="#cccccc" stroke-width="1"/></svg>
<svg style="left:942.5px;top:52px" width="13" height="3" viewBox="0 0 13 3"><circle cx="1.3" cy="1.500" r="1" fill="#cccccc"/><circle cx="6.300" cy="1.500" r="1" fill="#cccccc"/><circle cx="11.300" cy="1.500" r="1" fill="#cccccc"/></svg>
<svg style="left:971px;top:48px" width="7" height="10" viewBox="0 0 7 10"><path d="M6 0.500L1.300 5L6 9.500" fill="none" stroke="#cccccc" stroke-width="1.200"/></svg>
<svg style="left:996px;top:48px" width="10" height="10" viewBox="0 0 10 10"><path d="M0.500 0.500L9.500 9.500M9.500 0.500L0.500 9.500" stroke="#cccccc" stroke-width="1.200"/></svg>
<svg style="left:63px;top:46.5px" width="12" height="11" viewBox="0 0 12 11"><path d="M7.200 2.700A3.500 3.500 0 1 0 7.200 8.100" fill="none" stroke="#519aba" stroke-width="2.400"/><path d="M7.300 5.400H11.500M9.400 3.300V7.500" stroke="#519aba" stroke-width="1.300"/></svg>
<svg style="left:69px;top:75.5px" width="12" height="11" viewBox="0 0 12 11"><path d="M7.200 2.700A3.500 3.500 0 1 0 7.200 8.100" fill="none" stroke="#519aba" stroke-width="2.400"/><path d="M7.300 5.400H11.500M9.400 3.300V7.500" stroke="#519aba" stroke-width="1.300"/></svg>
<svg style="left:152.500px;top:49px" width="9" height="9" viewBox="0 0 9 9"><path d="M0.400 0.400L8.600 8.600M8.600 0.400L0.400 8.600" stroke="#ffffff" stroke-width="1.200"/></svg>
<svg style="left:154px;top:77px" width="6" height="10" viewBox="0 0 6 10"><path d="M0.800 0.500L5.200 5L0.800 9.500" fill="none" stroke="#a9a9a9" stroke-width="1.100"/></svg>
<svg style="left:166px;top:73.500px" width="14" height="14" viewBox="0 0 14 14"><path d="M7 0.800L12.800 3.600V10.300L7 13.200L1.200 10.300V3.600ZM1.200 3.600L7 6.500L12.800 3.600M7 6.500V13.200" fill="none" stroke="#b180d7" stroke-width="1.100" stroke-linejoin="round"/></svg>
<svg style="left:12px;top:711px" width="11" height="12" viewBox="0 0 11 12"><path d="M0.300 3.400L4.800 7.300L0.400 11.500M9.700 0.300L5.400 4.100L9.500 7.600" fill="none" stroke="#ffffff" stroke-width="1.250" stroke-linecap="round"/></svg>
<svg style="left:42.500px;top:710.500px" width="13" height="13" viewBox="0 0 13 13"><circle cx="6.500" cy="6.500" r="5.900" fill="none" stroke="#cccccc" stroke-width="1.100"/><path d="M4 4L9 9M9 4L4 9" stroke="#cccccc" stroke-width="1.100"/></svg>
<svg style="left:69.500px;top:711px" width="13" height="12" viewBox="0 0 13 12"><path d="M6.500 0.900L12.300 11.300H0.700Z" fill="none" stroke="#cccccc" stroke-width="1.100" stroke-linejoin="round"/><path d="M6.500 4.300V8M6.500 9V10.200" stroke="#cccccc" stroke-width="1.100"/></svg>
<svg style="left:110px;top:710.300px" width="13" height="13" viewBox="0 0 13 13"><path d="M2.600 12.600L6.500 4L10.400 12.600M4 9.600H9" fill="none" stroke="#cccccc" stroke-width="1.400"/><circle cx="6.500" cy="4" r="1.300" fill="#cccccc"/><path d="M3.900 1.400A3.600 3.600 0 0 0 3.900 6.800M9.100 1.400A3.600 3.600 0 0 1 9.100 6.800M1.900 0.400A5.500 5.500 0 0 0 1.900 8M11.100 0.400A5.500 5.500 0 0 1 11.100 8" fill="none" stroke="#cccccc" stroke-width="1.250"/></svg>
<svg style="left:995.5px;top:710.500px" width="12" height="13" viewBox="0 0 12 13"><path d="M1 10.300C2.300 9 2.300 8 2.300 5.500A3.700 3.700 0 0 1 9.700 5.500C9.700 8 9.700 9 11 10.300Z" fill="none" stroke="#cccccc" stroke-width="1.100" stroke-linejoin="round"/><path d="M4.800 10.500A1.300 1.300 0 0 0 7.400 10.500" fill="none" stroke="#cccccc" stroke-width="1.100"/></svg>
<div class="abs" style="left:617px;top:728px;width:45px;height:40px;background:#393939"></div>
<div class="abs" style="left:617px;top:766px;width:45px;height:2px;background:#76b9ed"></div>
<div class="abs" style="left:575px;top:766px;width:37px;height:2px;background:#76b9ed"></div>
<svg style="left:16px;top:740px" width="16" height="16" viewBox="0 0 16 16"><path fill="#ffffff" d="M0 2.300L6.500 1.400V7.600H0ZM7.300 1.300L16 0V7.600H7.300ZM0 8.400H6.500V14.600L0 13.700ZM7.300 8.400H16V16L7.300 14.700Z"/></svg>
<svg style="left:60px;top:739px" width="17" height="17" viewBox="0 0 17 17"><circle cx="10.300" cy="6.300" r="5.200" fill="none" stroke="#2b2b2b" stroke-width="1.400"/><path d="M6.500 10.200L0.700 16.200" stroke="#2b2b2b" stroke-width="1.500"/></svg>
<svg style="left:257px;top:732px" width="58" height="32" viewBox="0 0 58 32"><g transform="rotate(-18.600 28.500 15.800)"><rect x="0.900" y="11.800" width="55.200" height="10" rx="5" fill="#4a6a9a"/><rect x="0.900" y="10.600" width="55.200" height="10" rx="5" fill="#d6e6f8"/><rect x="8.500" y="10.600" width="5.500" height="10" fill="#efa468"/><rect x="46" y="10.600" width="5" height="10" fill="#efa468"/><path d="M22 17L21 8.500C21 6.800 25 6.800 25.300 8.500L26.500 13.500L30.500 16V19.500H22.500Z" fill="#2a2a2a"/><path d="M33 17L32 8.500C32 6.800 36 6.800 36.300 8.500L37.500 13.500L41.500 16V19.500H33.500Z" fill="#2a2a2a"/><rect x="25.500" y="15.500" width="4.500" height="2.500" fill="#8a8a8a"/><rect x="36.500" y="15.500" width="4.500" height="2.500" fill="#8a8a8a"/></g></svg>
<svg style="left:307px;top:737px" width="26" height="28" viewBox="0 0 26 28"><circle cx="15.800" cy="4.800" r="3.400" fill="#2f86ea"/><path d="M1 21C3 12.500 8.500 7 15 7C21 7.200 24.500 12.500 24.200 26C17 28.800 7 27 1 21Z" fill="#2f7fe0"/><path d="M2.600 15.800C9 20 17 21.300 24.300 19.600L24.300 21.200C17 23 8.500 21.600 2 17.300Z" fill="#e9a55a"/><path d="M1.800 18C8.500 22.500 17 23.800 24.300 22L24.300 23.200C17 25 8 23.800 1.500 19.200Z" fill="#9fb2cf"/><path d="M1.300 19.800C8 24.300 17 25.600 24.300 23.900L24.300 24.800C17 26.600 8 25.400 1.100 20.800Z" fill="#e9a55a"/></svg>
<svg style="left:351px;top:740px" width="18" height="16" viewBox="0 0 18 16"><path d="M1.100 2.500V1H11.900V2.500M1.100 13.500V15H11.900V13.500" fill="none" stroke="#ffffff" stroke-width="1.200"/><rect x="1.100" y="4.600" width="10.800" height="6.800" fill="none" stroke="#ffffff" stroke-width="1.200"/><path d="M15.300 0.300V15.700" stroke="#ffffff" stroke-width="1.200"/><rect x="14.600" y="4.500" width="2.800" height="3" fill="#ffffff"/></svg>
<svg style="left:396.500px;top:735.500px" width="25" height="25" viewBox="0 0 25 25"><defs><linearGradient id="eg1" x1="0" y1="0" x2="0.300" y2="1"><stop offset="0" stop-color="#30b4ee"/><stop offset="1" stop-color="#1668c0"/></linearGradient><linearGradient id="eg2" x1="0" y1="0" x2="1" y2="0.300"><stop offset="0" stop-color="#2bb3e6"/><stop offset="0.600" stop-color="#3fc8a8"/><stop offset="1" stop-color="#6cd65a"/></linearGradient></defs><path d="M12.500 0.500A12 12 0 0 0 0.500 12.500A12 12 0 0 0 12.500 24.500C17 24.500 21 22 23 18.500C20 20.500 15.500 20.500 13.500 17.500C12 15 12.500 12.500 14.500 11.500L24.300 14C25 8 21 0.500 12.500 0.500Z" fill="url(#eg1)"/><path d="M1.500 8.500C4 2 11 -0.500 17.500 1.500C23 3.500 25.500 9 24.200 13.500C23 17 17.500 17 15.800 14.500C17 12.500 16 9.500 12.500 8.500C8 7.500 3.500 10 2.800 15C1 13 0.500 10.500 1.500 8.500Z" fill="url(#eg2)"/><path d="M2.800 15C3 10.500 7.500 8 11.500 9.500C8.500 12 9 17.500 12.500 20.500C15.500 22.800 20 22 23 18.500C21 22.500 16.500 25 11.500 24.500C6.500 23.800 3 20 2.800 15Z" fill="#1459b0"/></svg>
<svg style="left:443px;top:738px" width="24" height="19" viewBox="0 0 24 19"><path d="M0.500 1.500C0.500 0.800 1 0.300 1.700 0.300H8L10 2.500H22.300C23 2.500 23.500 3 23.500 3.700V17.500H0.500Z" fill="#e8a823"/><rect x="0.500" y="4.500" width="23" height="13.800" rx="0.800" fill="#ffd75e"/><path d="M6.500 18.300V11.500H17.500V18.300H15V14H9V18.300Z" fill="#3b8fd9"/></svg>
<svg style="left:488px;top:736px" width="25" height="25" viewBox="0 0 25 25"><path d="M7.500 6.500V3.800C7.500 2.500 8.500 1.500 9.800 1.500H15.200C16.500 1.500 17.500 2.500 17.500 3.800V6.500" fill="none" stroke="#2f9be6" stroke-width="2"/><rect x="1" y="6" width="23" height="18" rx="2.500" fill="#f4f4f4"/><rect x="7.500" y="10" width="4.300" height="4.300" fill="#f25022"/><rect x="13" y="10" width="4.300" height="4.300" fill="#7fba00"/><rect x="7.500" y="15.500" width="4.300" height="4.300" fill="#00a4ef"/><rect x="13" y="15.500" width="4.300" height="4.300" fill="#ffb900"/></svg>
<svg style="left:534px;top:736px" width="26" height="23" viewBox="0 0 26 23"><path d="M0.500 8L13 0.500L25.500 8V22.500H0.500Z" fill="#1565b8"/><path d="M3 8.500H23V17H3Z" fill="#ffffff"/><path d="M0.500 8.500L13 15.500L25.500 8.500V22.500H0.500Z" fill="#3aa8ea"/><path d="M0.500 22.500L13 15.500L25.500 22.500Z" fill="#2196e3"/></svg>
<svg style="left:581px;top:735.500px" width="24" height="24" viewBox="0 0 24 24"><circle cx="12" cy="12" r="12" fill="#e94235"/><path d="M12 12L1.600 6A12 12 0 0 0 11 24L17.200 15Z" fill="#34a853"/><path d="M12 12L17.200 15L11 24A12 12 0 0 0 22.400 6H12Z" fill="#fbbc05"/><path d="M12 12V6H22.400A12 12 0 0 0 1.600 6Z" fill="#e94235"/><circle cx="12" cy="12" r="5.600" fill="#ffffff"/><circle cx="12" cy="12" r="4.400" fill="#4285f4"/></svg>
<svg style="left:626px;top:735px" width="26" height="26" viewBox="0 0 24 24"><path fill="#2489ca" d="M23.150 2.587L18.210.210a1.494 1.494 0 0 0-1.705.290l-9.460 8.630-4.120-3.128a.999.999 0 0 0-1.276.057L.327 7.261A1 1 0 0 0 .326 8.740L3.899 12 .326 15.260a1 1 0 0 0 .001 1.479L1.650 17.940a.999.999 0 0 0 1.276.057l4.120-3.128 9.460 8.630a1.492 1.492 0 0 0 1.704.290l4.942-2.377A1.500 1.500 0 0 0 24 20.060V3.939a1.500 1.500 0 0 0-.850-1.352zm-5.146 14.861L10.826 12l7.178-5.448v10.896z"/><path fill="#3aa6ee" d="M18 .2L24 3.200V20.800L18 23.800Z" opacity="0.600"/></svg>
<svg style="left:725px;top:740px" width="25" height="16" viewBox="0 0 25 16"><rect x="0.700" y="0.700" width="20" height="14.600" rx="1" fill="none" stroke="#ffffff" stroke-width="1.300"/><path d="M20.700 3.500H24.200V13.500C24.200 14.500 23.500 15.300 22.500 15.300H19" fill="none" stroke="#ffffff" stroke-width="1.300"/><path d="M3.500 4H18M12.500 7.500H18M12.500 10H18M3.500 12.500H18" stroke="#ffffff" stroke-width="1.200"/><rect x="4" y="6.800" width="6" height="3.600" fill="none" stroke="#ffffff" stroke-width="1.200"/></svg>
<svg style="left:774px;top:744px" width="13" height="8" viewBox="0 0 13 8"><path d="M0.600 7.300L6.500 1.200L12.400 7.300" fill="none" stroke="#ffffff" stroke-width="1.300"/></svg>
<svg style="left:799px;top:739.500px" width="13" height="17" viewBox="0 0 13 17"><rect x="0.700" y="4.700" width="8.300" height="7.600" rx="1.500" fill="none" stroke="#ffffff" stroke-width="1.200"/><path d="M9.300 7.500L12.300 5.800V11.200L9.300 9.500" fill="none" stroke="#ffffff" stroke-width="1.100"/><path d="M2 2.800C3.500 0.800 7.500 0.800 9 2.800M2 14.200C3.500 16.200 7.500 16.200 9 14.200" fill="none" stroke="#ffffff" stroke-width="1.100"/></svg>
<svg style="left:823px;top:741px" width="15" height="15" viewBox="0 0 15 15"><circle cx="11.500" cy="12.500" r="1.500" fill="#ffffff"/><path d="M7.800 12.500A3.700 3.700 0 0 1 11.500 8.800" fill="none" stroke="#ffffff" stroke-width="1.100"/><path d="M4.800 12.500A6.700 6.700 0 0 1 11.500 5.800" fill="none" stroke="#bdbdbd" stroke-width="1.100"/><path d="M1.900 12.500A9.600 9.600 0 0 1 11.500 2.900" fill="none" stroke="#9a9a9a" stroke-width="1.100"/><path d="M0.600 10.500A12 12 0 0 1 12.800 0.600" fill="none" stroke="#8a8a8a" stroke-width="1"/></svg>
<svg style="left:845px;top:741px" width="17" height="15" viewBox="0 0 17 15"><path d="M0.700 5H3.300L6.800 1.500V13.500L3.300 10H0.700Z" fill="none" stroke="#ffffff" stroke-width="1.100" stroke-linejoin="round"/><path d="M9 5.300A3 3 0 0 1 9 9.700M11 3.300A5.800 5.800 0 0 1 11 11.700M13.200 1.300A8.700 8.700 0 0 1 13.200 13.700" fill="none" stroke="#ffffff" stroke-width="1.100"/></svg>
<svg style="left:983px;top:740px" width="17" height="16" viewBox="0 0 17 16"><path d="M0.700 0.700H16.300V11.700H11L8.500 15L6 11.700H0.700Z" fill="none" stroke="#ffffff" stroke-width="1.300" stroke-linejoin="miter"/></svg>
<div class="abs" style="left:1019px;top:728px;width:1px;height:40px;background:#4a4a4a"></div>

</body>
</html>
